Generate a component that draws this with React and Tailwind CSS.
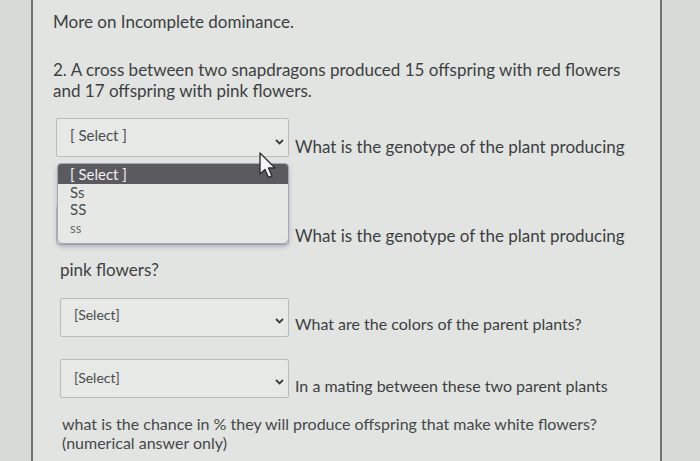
import React from 'react';

function SelectBox({ label, width, textTop, chevTop, textClass }) {
  return (
    <div className={`relative h-[39px] ${width} bg-[#e7e9e6] border border-[#b9bcb9] rounded-[2px] shrink-0`}>
      {label && (
        <span className={`absolute left-[13px] ${textTop} ${textClass} leading-[18px] text-[#4a4d50]`}>{label}</span>
      )}
      <svg width="9" height="6" viewBox="0 0 9 6" className={`absolute right-[4px] ${chevTop}`}>
        <path d="M1 1 L4.5 4.5 L8 1" fill="none" stroke="#3a3d40" strokeWidth="1.8" />
      </svg>
    </div>
  );
}

function Cursor() {
  return (
    <svg width="20" height="28" viewBox="0 0 20 28" className="absolute left-[202px] top-[34px] z-20">
      <path d="M2 1 L2 22 L7 17.5 L10.5 25.5 L14 24 L10.5 16 L17 16 Z" fill="#f4f4f4" stroke="#2f3032" strokeWidth="1.4" strokeLinejoin="round" />
    </svg>
  );
}

export default function App() {
  return (
    <div className="w-[700px] h-[461px] overflow-hidden bg-[#d7dad7] font-['Lato','Noto_Sans',sans-serif]">
      <div className="ml-[31px] w-[631px] h-full border-l-2 border-r-2 border-[#707370] bg-[#e2e4e1] pl-[20px] pt-[11px] text-[#3c3f41]">
        <h2 className="text-[17px] leading-[22px]">More on Incomplete dominance.</h2>

        <p className="mt-[26px] text-[17px] leading-[21px] pr-[20px]">
          2. A cross between two snapdragons produced 15 offspring with red flowers and 17 offspring with pink flowers.
        </p>

        {/* row 1 with open dropdown */}
        <div className="mt-[17px] ml-[3px] flex items-end gap-[6px]">
          <div className="relative">
            <SelectBox label="[ Select ]" width="w-[233px]" textTop="top-[7px]" chevTop="top-[20px]" textClass="text-[15px]" />
            <div className="absolute left-[1px] top-[45px] w-[232px] h-[81px] z-10 bg-[#e6e8e5] rounded-b-[6px] rounded-t-[4px] border border-[#a3a8b8] shadow-[0_3px_4px_rgba(110,115,150,0.45)] flex flex-col">
              <div className="h-[20px] bg-[#5b5a5f] rounded-t-[3px] pl-[12px] text-[15px] leading-[20px] text-[#f1f1f1]">[ Select ]</div>
              <div className="h-[16px] pl-[12px] text-[15px] leading-[16px] text-[#4b4e51]">Ss</div>
              <div className="h-[18px] pl-[12px] text-[15px] leading-[18px] text-[#4b4e51]">SS</div>
              <div className="h-[20px] pl-[12px] text-[13px] leading-[20px] text-[#6a6e73]">ss</div>
            </div>
            <Cursor />
          </div>
          <span className="text-[17px] leading-[20px]">What is the genotype of the plant producing</span>
        </div>

        {/* row 2, select hidden under the open list */}
        <div className="mt-[49px] ml-[3px] flex items-end gap-[6px]">
          <SelectBox label="" width="w-[233px]" textTop="top-[7px]" chevTop="top-[20px]" textClass="text-[15px]" />
          <span className="text-[17px] leading-[20px] mb-[-1px]">What is the genotype of the plant producing</span>
        </div>

        <p className="mt-[15px] ml-[7px] text-[17px] leading-[20px]">pink flowers?</p>

        <div className="mt-[18px] ml-[7px] flex items-end gap-[6px]">
          <SelectBox label="[Select]" width="w-[229px]" textTop="top-[7px]" chevTop="top-[19px]" textClass="text-[14px]" />
          <span className="text-[16px] leading-[20px] mb-[3px]">What are the colors of the parent plants?</span>
        </div>

        <div className="mt-[22px] ml-[7px] flex items-end gap-[6px]">
          <SelectBox label="[Select]" width="w-[229px]" textTop="top-[9px]" chevTop="top-[19px]" textClass="text-[14px]" />
          <span className="text-[16px] leading-[20px] mb-[2px]">In a mating between these two parent plants</span>
        </div>

        <p className="mt-[16px] ml-[9px] text-[16px] leading-[19px] text-[#45484a]">
          what is the chance in % they will produce offspring that make white flowers?
          <br />
          (numerical answer only)
        </p>
      </div>
    </div>
  );
}
